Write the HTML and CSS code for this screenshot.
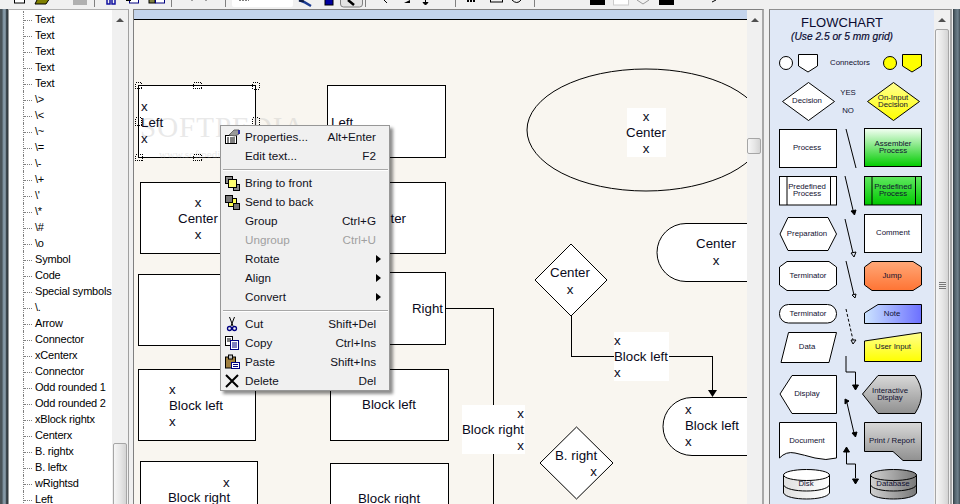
FILE: index.html
```html
<!DOCTYPE html>
<html lang="en">
<head>
<meta charset="utf-8">
<title>Flowchart editor</title>
<link rel="stylesheet" href="styles.css">
</head>
<body>
<div class="app">
  <div class="toolbar">
    <svg class="tb-icons" width="960" height="9" viewBox="0 0 960 9">
      <rect x="14.500" y="-4" width="10" height="7" fill="#fff" stroke="#000"/>
      <path d="M35 4 L38 -2 H50 L46 4 Z" fill="#808000" stroke="#000"/>
      <rect x="73" y="-3" width="14" height="8" fill="#b0b0b0"/>
      <path d="M94.500 0V7M171.500 0V7M225.500 0V7M365.500 0V7M455.500 0V7M534.500 0V7" stroke="#808080" fill="none"/>
      <path d="M107 0v4h3V0M112 0v4h3V0" fill="none" stroke="#1010a0" stroke-width="1.500"/>
      <rect x="129.500" y="-3" width="9" height="6" fill="#fff" stroke="#000080"/><rect x="126" y="0" width="5" height="1" fill="#000"/>
      <rect x="149" y="-2" width="6" height="5" fill="#808040" stroke="#000"/><rect x="155.500" y="-3" width="9" height="6" fill="#fff" stroke="#000080"/>
      <path d="M191 0h2M205 0h2" stroke="#a0a0a0" stroke-width="2"/>
      <rect x="232" y="-4" width="61" height="11" rx="2" fill="#fff"/>
      <path d="M239 0h10" stroke="#000" stroke-dasharray="2 1"/>
      <path d="M299 0 L304 2 L311 6" stroke="#1a3a90" stroke-width="2.500" fill="none"/><path d="M299 1h5" stroke="#000"/>
      <rect x="325" y="-2" width="8" height="7" fill="#0000a0" stroke="#000"/>
      <rect x="340.500" y="-4" width="22" height="11" rx="3" fill="#e4e4e4" stroke="#808080"/>
      <path d="M348 0 L354 5" stroke="#000" stroke-width="2.500"/>
      <path d="M384 0l3 3" stroke="#000"/>
      <path d="M404 3h6V0z" fill="#000"/>
      <path d="M425.500 0v3M423 2.500h5L425.500 5z" stroke="#000" fill="#000"/>
      <path d="M467 1h9" stroke="#000" stroke-dasharray="2 1" stroke-width="2"/>
      <rect x="490.500" y="-4" width="12" height="6" fill="none" stroke="#000"/>
      <path d="M512 0q5 5 9 0" fill="none" stroke="#000"/>
      <rect x="590" y="-2" width="15" height="7" fill="#000"/>
      <rect x="613.500" y="-2" width="15" height="7" fill="#fff" stroke="#ccc"/>
      <path d="M637 0l6 4 6-4" fill="none" stroke="#999"/>
      <rect x="659" y="-2" width="15" height="7" fill="#000"/>
      <path d="M712 2l4-2" stroke="#000"/>
    </svg>
  </div>
  <div class="main">
    <div class="frame-left"></div>

    <div class="tree-pane">
      <ul class="tree">
        <li>Text</li><li>Text</li><li>Text</li><li>Text</li><li>Text</li>
        <li>\&gt;</li><li>\&lt;</li><li>\~</li><li>\=</li><li>\-</li><li>\+</li><li>\'</li><li>\*</li><li>\#</li><li>\o</li>
        <li>Symbol</li><li>Code</li><li>Special symbols</li><li>\.</li><li>Arrow</li><li>Connector</li><li>xCenterx</li><li>Connector</li>
        <li>Odd rounded 1</li><li>Odd rounded 2</li><li>xBlock rightx</li><li>Centerx</li><li>B. rightx</li><li>B. leftx</li><li>wRightsd</li><li>Left</li>
      </ul>
      <div class="scrollbar scrollbar-tree">
        <div class="sb-btn"><span class="arrow-up"></span></div>
        <div class="thumb thumb-tree"></div>
      </div>
    </div>

    <div class="canvas-pane">
      <div class="canvas-col">
        <div class="ruler"></div>
        <svg class="drawing" width="613" height="484" viewBox="134 20 613 484">
          <g class="ol">
            <rect x="138.500" y="85.500" width="117" height="72"/>
            <rect x="327.500" y="85.500" width="118" height="72"/>
            <rect x="140.500" y="182.500" width="117" height="71"/>
            <rect x="327.500" y="182.500" width="118" height="71"/>
            <rect x="138.500" y="274.500" width="118" height="71"/>
            <rect x="327.500" y="272.500" width="118" height="72"/>
            <rect x="138.500" y="369.500" width="117" height="71"/>
            <rect x="330.500" y="369.500" width="118" height="71"/>
            <rect x="140.500" y="461.500" width="117" height="60"/>
            <rect x="330.500" y="463.500" width="118" height="60"/>
            <ellipse class="open" cx="646" cy="130" rx="119" ry="61"/>
            <path d="M748 223.500H686A29 29 0 0 0 686 281.500H748"/>
            <path d="M748 397.500H692A29 29 0 0 0 692 455.500H748"/>
            <polygon points="571,244 607,280 571,316 535,280"/>
            <polygon points="576.500,427 613,463 576.500,499 540,463"/>
          </g>
          <path class="wire" d="M446 308.500H493.500V405M493.500 454V504M571.500 316V356.500H614M669 356.500H712.500V392"/>
          <path d="M708 390H717L712.500 397Z" fill="#000"/>
          <rect class="tbox" x="627" y="108" width="39" height="49"/>
          <rect class="tbox" x="614" y="332" width="55" height="49"/>
          <rect class="tbox" x="462" y="405" width="63" height="49"/>

          <g class="wm">
            <text class="wm-big" x="140" y="137">SOFTPEDIA</text>
            <text class="wm-small" x="159" y="158">www.softpedia.com</text>
          </g>

          <g class="dt">
            <text x="141" y="111">x</text><text x="141" y="127">Left</text><text x="141" y="143">x</text>
            <text x="331" y="127">Left</text>
            <g class="mid">
              <text x="198" y="207">x</text><text x="198" y="223">Center</text><text x="198" y="239">x</text>
              <text x="646" y="121">x</text><text x="646" y="137">Center</text><text x="646" y="153">x</text>
              <text x="716" y="248">Center</text><text x="716" y="265">x</text>
              <text x="570" y="277">Center</text><text x="570" y="294">x</text>
              <text x="389" y="409">Block left</text>
            </g>
            <g class="end">
              <text x="406" y="223">Center</text>
              <text x="443" y="313">Right</text>
              <text x="524" y="418">x</text><text x="524" y="434">Block right</text><text x="524" y="450">x</text>
              <text x="597" y="476">x</text>
            </g>
            <text x="169" y="394">x</text><text x="169" y="410">Block left</text><text x="169" y="426">x</text>
            <text x="223" y="487">x</text><text x="168" y="502">Block right</text>
            <text x="358" y="503">Block right</text>
            <text x="614" y="345">x</text><text x="614" y="361">Block left</text><text x="614" y="377">x</text>
            <text x="685" y="414">x</text><text x="685" y="430">Block left</text><text x="685" y="446">x</text>
            <text x="555" y="460">B. right</text>
          </g>

          <g class="handles">
            <rect x="135.500" y="82.500" width="6" height="6"/><rect x="193.500" y="82.500" width="8" height="6"/><rect x="252.500" y="82.500" width="7" height="7" rx="2"/>
            <rect x="135.500" y="117.500" width="6" height="8"/><rect x="252.500" y="117.500" width="7" height="8" rx="2"/>
            <rect x="135.500" y="154.500" width="7" height="6"/><rect x="193.500" y="154.500" width="8" height="6"/>
          </g>
        </svg>
      </div>
      <div class="scrollbar scrollbar-canvas">
        <div class="sb-btn"><span class="arrow-up"></span></div>
        <div class="thumb thumb-canvas"></div>
      </div>
    </div>

    <div class="palette-pane">
      <svg class="palette" width="164" height="494" viewBox="770 10 164 494">
        <defs>
          <linearGradient id="gGreen" x1="0" y1="0" x2="0" y2="1"><stop offset="0" stop-color="#f4fff4"/><stop offset="1" stop-color="#00cc00"/></linearGradient>
          <linearGradient id="gGreen2" x1="0" y1="0" x2="0" y2="1"><stop offset="0" stop-color="#60e860"/><stop offset="1" stop-color="#00c800"/></linearGradient>
          <linearGradient id="gOrange" x1="0" y1="0" x2="0" y2="1"><stop offset="0" stop-color="#ffa878"/><stop offset="1" stop-color="#ff7434"/></linearGradient>
          <linearGradient id="gNote" x1="0" y1="0" x2="1" y2="0"><stop offset="0" stop-color="#cce4ff"/><stop offset="1" stop-color="#6c70ff"/></linearGradient>
          <linearGradient id="gYellow" x1="0" y1="0" x2="0" y2="1"><stop offset="0" stop-color="#ffff90"/><stop offset="1" stop-color="#ffff00"/></linearGradient>
          <linearGradient id="gGrey" x1="0" y1="0" x2="0" y2="1"><stop offset="0" stop-color="#d8d8d8"/><stop offset="1" stop-color="#909090"/></linearGradient>
          <linearGradient id="gDisk" x1="0" y1="0" x2="1" y2="0"><stop offset="0" stop-color="#e0e0e0"/><stop offset="1" stop-color="#fff"/></linearGradient>
          <linearGradient id="gDb" x1="0" y1="0" x2="1" y2="0"><stop offset="0" stop-color="#d0d0d0"/><stop offset="1" stop-color="#787878"/></linearGradient>
        </defs>

        <text class="p-title" x="842" y="27">FLOWCHART</text>
        <text class="p-sub" x="842" y="40">(Use 2.5 or 5 mm grid)</text>

        <g class="pl">
          <circle cx="786" cy="63" r="6.500"/>
          <polygon points="798.500,54.500 817.500,54.500 817.500,66 808,72 798.500,66"/>
          <polygon points="808.500,82.500 834.500,101.500 808.500,120.500 782.500,101.500"/>
          <rect x="779.500" y="129.500" width="57" height="38"/>
          <rect x="779.500" y="176.500" width="57" height="28.500"/>
          <path class="bare" d="M787 176.500V205M830.500 176.500V205"/>
          <polygon points="788,217.500 828,217.500 836.500,234 828,250.500 788,250.500 780,234"/>
          <rect x="864.500" y="214.500" width="57" height="38"/>
          <polygon points="787,261.500 829,261.500 836.500,267 836.500,285 829,290.500 787,290.500 779.500,285 779.500,267"/>
          <rect x="779.500" y="304.500" width="57" height="18.500" rx="9"/>
          <polygon points="788.500,332.500 836.500,332.500 829,362.500 781,362.500"/>
          <polygon points="792,375.500 836.500,375.500 836.500,413.500 792,413.500 780,394"/>
          <path d="M779.500 422.500H836.500V458Q826 461 815 458T795 453T779.500 458Z"/>
          <path class="f-disk" d="M783.500 475V493C787 501 826 501 829.500 493V475"/>
          <ellipse cx="806.500" cy="475" rx="23" ry="5.500"/>
          <path class="bare" d="M783.500 485C787 493 826 493 829.500 485"/>
        </g>
        <g class="pl">
          <circle cx="890" cy="63" r="6.500" class="f-yel"/>
          <polygon class="f-yel" points="902.500,54.500 921.500,54.500 921.500,66 912,72 902.500,66"/>
          <polygon class="f-yelg" points="893.500,82.500 919.500,101.500 893.500,120.500 867.500,101.500"/>
          <rect class="f-green" x="864.500" y="128.500" width="57" height="38"/>
          <rect class="f-green2" x="864.500" y="176.500" width="57" height="28.500"/>
          <path class="bare" d="M872 176.500V205M915.500 176.500V205"/>
          <polygon class="f-orange" points="872,261.500 913,261.500 921.500,267 921.500,285 913,290.500 872,290.500 864.500,285 864.500,267"/>
          <polygon class="f-note" points="864.500,313 878,304.500 921.500,304.500 921.500,323.500 864.500,323.500"/>
          <polygon class="f-yelg" points="864.500,341 921.500,332.500 921.500,361.500 864.500,361.500"/>
          <path class="f-grey" d="M878 375.500H915Q921.500 385 921.500 394T915 413.500H878L862.500 394Z"/>
          <polygon class="f-grey" points="864.500,422.500 921.500,422.500 921.500,460.500 903,460.500 893,451.500 864.500,451.500"/>
          <path class="f-db" d="M870.500 475V493C874 501 913 501 916.500 493V475"/>
          <ellipse class="f-db" cx="893.500" cy="475" rx="23" ry="5.500"/>
          <path class="bare" d="M870.500 485C874 493 913 493 916.500 485"/>
        </g>

        <g class="ln">
          <path d="M846 129L856 168M845 176L853 210M845 219L853 253M846 261L854 295"/>
          <path class="dash" d="M846 309L853 340"/>
          <path d="M846 356V372H855.500V386"/>
          <path d="M847 403L854 433"/>
          <path d="M846.500 450V464H855.500V478"/>
        </g>
        <g>
          <path class="ah" d="M851 211L856 210L854.500 215Z"/>
          <path class="ah ah-o" d="M851 253L856 252L854 257Z"/>
          <path class="ah ah-o" d="M852 295L856 294L855 298Z"/>
          <path class="ah ah-o" d="M851 340L856 340L853 344Z"/>
          <path class="ah" d="M852.500 385H858.500L855.500 390Z"/>
          <path class="ah" d="M845 399L849 401L845 404ZM852 433L857 432L855.500 437Z"/>
          <path class="ah" d="M843.500 452H849.500L846.500 447ZM852.500 479H858.500L855.500 484Z"/>
        </g>

        <g class="pt">
          <text x="850" y="65">Connectors</text>
          <text x="807" y="103">Decision</text>
          <text x="848" y="95">YES</text>
          <text x="848" y="113">NO</text>
          <text x="893" y="100">On-Input</text><text x="893" y="107">Decision</text>
          <text x="807" y="150">Process</text>
          <text x="893" y="146">Assembler</text><text x="893" y="153">Process</text>
          <text x="807" y="189">Predefined</text><text x="807" y="196">Process</text>
          <text x="893" y="189">Predefined</text><text x="893" y="196">Process</text>
          <text x="807" y="236">Preparation</text>
          <text x="893" y="235">Comment</text>
          <text x="808" y="278">Terminator</text>
          <text x="892" y="278">Jump</text>
          <text x="808" y="316">Terminator</text>
          <text x="892" y="316">Note</text>
          <text x="807" y="349">Data</text>
          <text x="893" y="349">User Input</text>
          <text x="807" y="396">Display</text>
          <text x="890" y="393">Interactive</text><text x="890" y="400">Display</text>
          <text x="807" y="443">Document</text>
          <text x="892" y="443">Print / Report</text>
          <text x="806" y="486">Disk</text>
          <text x="893" y="486">Database</text>
        </g>
      </svg>
      <div class="scrollbar scrollbar-palette">
        <div class="sb-btn"><span class="arrow-up"></span></div>
        <div class="thumb thumb-palette"><span class="grip"></span></div>
      </div>
    </div>
    <div class="frame-right"></div>
  </div>

  <div class="menu">
    <div class="mi"><svg class="ic" viewBox="0 0 16 16"><rect x="1.500" y="6.500" width="11" height="8" fill="#fff" stroke="#000"/><path d="M3 9h2M6 9h5M3 11h2M6 11h5M3 13h2M6 13h5" stroke="#000"/><path d="M5 6L10 1H15V5L11 7Z" fill="#999" stroke="#666"/><rect x="14" y="1" width="2" height="4" fill="#3030a0"/></svg><span class="lb">Properties...</span><span class="sc">Alt+Enter</span></div>
    <div class="mi"><span class="ic"></span><span class="lb">Edit text...</span><span class="sc">F2</span></div>
    <div class="ms"></div>
    <div class="mi"><svg class="ic" viewBox="0 0 16 16"><rect x="1.500" y="1.500" width="7" height="7" fill="#888" stroke="#000"/><rect x="9.500" y="9.500" width="6" height="6" fill="#888" stroke="#000"/><rect x="4.500" y="4.500" width="8" height="8" fill="#ffff70" stroke="#000"/></svg><span class="lb">Bring to front</span></div>
    <div class="mi"><svg class="ic" viewBox="0 0 16 16"><rect x="4.500" y="4.500" width="8" height="8" fill="#ffff50" stroke="#000"/><rect x="1.500" y="1.500" width="7" height="7" fill="#777" stroke="#000"/><rect x="9.500" y="9.500" width="6" height="6" fill="#777" stroke="#000"/></svg><span class="lb">Send to back</span></div>
    <div class="mi"><span class="ic"></span><span class="lb">Group</span><span class="sc">Ctrl+G</span></div>
    <div class="mi off"><span class="ic"></span><span class="lb">Ungroup</span><span class="sc">Ctrl+U</span></div>
    <div class="mi"><span class="ic"></span><span class="lb">Rotate</span><span class="sub"></span></div>
    <div class="mi"><span class="ic"></span><span class="lb">Align</span><span class="sub"></span></div>
    <div class="mi"><span class="ic"></span><span class="lb">Convert</span><span class="sub"></span></div>
    <div class="ms"></div>
    <div class="mi"><svg class="ic" viewBox="0 0 16 16"><path d="M5.500 1L9 10M10.500 1L7 10" stroke="#000" fill="none"/><circle cx="5.500" cy="12.500" r="2" fill="none" stroke="#000080" stroke-width="1.300"/><circle cx="10.500" cy="12.500" r="2" fill="none" stroke="#000080" stroke-width="1.300"/></svg><span class="lb">Cut</span><span class="sc">Shift+Del</span></div>
    <div class="mi"><svg class="ic" viewBox="0 0 16 16"><rect x="1.500" y="1.500" width="7" height="9" fill="#fff" stroke="#000"/><path d="M3 4h4M3 6h4" stroke="#000"/><rect x="6.500" y="5.500" width="8" height="9" fill="#fff" stroke="#000080"/><path d="M8 8h5M8 10h5M8 12h5" stroke="#000080"/></svg><span class="lb">Copy</span><span class="sc">Ctrl+Ins</span></div>
    <div class="mi"><svg class="ic" viewBox="0 0 16 16"><rect x="1.500" y="3" width="10" height="11" fill="#a08040" stroke="#000"/><rect x="4.500" y="1" width="4" height="4" fill="#c8c8c8" stroke="#000"/><rect x="7.500" y="8.500" width="8" height="6" fill="#fff" stroke="#000080"/><path d="M9 10.500h5M9 12.500h5" stroke="#000080"/></svg><span class="lb">Paste</span><span class="sc">Shift+Ins</span></div>
    <div class="mi"><svg class="ic" viewBox="0 0 16 16"><path d="M2 2L14 14M14 2L2 14" stroke="#000" stroke-width="2"/></svg><span class="lb">Delete</span><span class="sc">Del</span></div>
  </div>
</div>
</body>
</html>
```
FILE: styles.css
```css
* { box-sizing: border-box; }
html, body { margin: 0; padding: 0; }
body { width: 960px; height: 504px; overflow: hidden; background: #f0f0f0; font-family: "Liberation Sans", Arial, sans-serif; }

.app { position: relative; width: 960px; height: 504px; overflow: hidden; display: flex; flex-direction: column; }

.toolbar { height: 9px; flex: none; background: #f0f0f0; overflow: hidden; }
.tb-icons { display: block; }

.main { flex: 1; min-height: 0; display: flex; }

.frame-left { width: 8px; flex: none; background: linear-gradient(90deg, #4a5358 0, #4a5358 25%, #7d909d 40%, #8a9daa 65%, #3d474d 80%, #2f373c 100%); }
.frame-right { width: 7px; flex: none; margin-left: 1px; background: linear-gradient(90deg, #2f3a40 0, #55666f 30%, #6f818c 70%, #3f4c54 100%); }

.tree-pane { width: 121px; flex: none; display: flex; border-left: 1px solid #9a9a9a; border-top: 1px solid #b0b0b0; border-right: 1px solid #a0a0a0; margin-right: 4px; background: #fff; }
.tree { flex: 1; margin: 0; padding: 1px 0 0 14px; list-style: none; font-size: 11px; letter-spacing: -0.2px; color: #000; background: #fff; overflow: hidden; min-width: 0; }
.tree li { height: 16px; line-height: 16px; white-space: nowrap; border-left: 1px dotted #808080; }
.tree li::before { content: ""; display: inline-block; width: 8px; height: 0; margin-right: 3px; border-top: 1px dotted #808080; vertical-align: middle; }

.scrollbar { flex: none; display: flex; flex-direction: column; background: #f0f0f0; }
.scrollbar-tree { width: 16px; }
.scrollbar-canvas { width: 15px; }
.scrollbar-palette { width: 16px; }
.sb-btn { height: 19px; flex: none; display: flex; align-items: center; justify-content: center; }
.arrow-up { width: 0; height: 0; border: 4px solid transparent; border-top: 0; border-bottom: 4px solid #505050; }

.thumb { flex: none; border: 1px solid #a6a6a6; border-radius: 2px; background: linear-gradient(90deg, #f6f6f6, #e6e6e6 55%, #d4d4d4); }
.thumb-tree { margin: 414px 1px 0; height: 70px; }
.thumb-canvas { margin: 109px 1px 0 0; height: 16px; width: 14px; }
.thumb-palette { margin: 0 1px; height: 512px; display: flex; justify-content: center; }
.grip { width: 7px; height: 8px; margin-top: 251px; background: repeating-linear-gradient(0deg, #777 0, #777 1px, #e8e8e8 1px, #e8e8e8 2px); }

.canvas-pane { width: 631px; flex: none; display: flex; border-left: 1px solid #808080; border-top: 1px solid #808080; border-right: 2px solid #a8a8a8; }
.canvas-col { width: 613px; flex: none; display: flex; flex-direction: column; }
.ruler { height: 10px; flex: none; background: #c4d4ec; border-bottom: 1px solid #000; }
.drawing { display: block; flex: none; background: #f9f6f0; }

.palette-pane { width: 183px; flex: none; margin-left: 5px; display: flex; border-left: 1px solid #808080; border-top: 1px solid #909090; border-right: 2px solid #a8a8a8; }
.palette { display: block; flex: none; background: #e0e8f6; }

.ol rect, .ol ellipse, .ol path, .ol polygon { fill: #fff; stroke: #000; stroke-width: 1; }
.ol rect { shape-rendering: crispEdges; }
.ol .open { fill: none; }
.wire { fill: none; stroke: #000; stroke-width: 1; shape-rendering: crispEdges; }
.tbox { fill: #fff; }

.dt text { font-family: "Liberation Sans", Arial, sans-serif; font-size: 13.300px; fill: #0a0a20; }
.dt .mid text { text-anchor: middle; }
.dt .end text { text-anchor: end; }

.wm text { font-family: "Liberation Serif", serif; fill: #b8b8b8; opacity: 0.3; }
.wm-big { font-size: 29px; letter-spacing: 1px; }
.wm-small { font-size: 11px; }

.handles rect { fill: none; stroke: #000; stroke-width: 1; stroke-dasharray: 1 1; shape-rendering: crispEdges; }

.pl > * { fill: #fff; stroke: #000; stroke-width: 1; }
.pl > .bare { fill: none; }
.pl > .f-disk { fill: url(#gDisk); }
.pl > .f-yel { fill: #ffff00; }
.pl > .f-yelg { fill: url(#gYellow); }
.pl > .f-green { fill: url(#gGreen); }
.pl > .f-green2 { fill: url(#gGreen2); }
.pl > .f-orange { fill: url(#gOrange); }
.pl > .f-note { fill: url(#gNote); }
.pl > .f-grey { fill: url(#gGrey); }
.pl > .f-db { fill: url(#gDb); }

.ln path { fill: none; stroke: #000; stroke-width: 1; }
.ln .dash { stroke-dasharray: 3 2; }
.ah { fill: #000; stroke: #000; stroke-width: 1; }
.ah-o { fill: #e0e8f6; }

.p-title { font-size: 13px; text-anchor: middle; fill: #0a0a30; }
.p-sub { font-size: 10.200px; font-style: italic; text-anchor: middle; fill: #0a0a30; stroke: #0a0a30; stroke-width: 0.200; }
.pt text { font-size: 7.800px; text-anchor: middle; fill: #101030; }

.menu { position: absolute; left: 220px; top: 125px; width: 170px; padding-top: 1px; background: #f0f0f0; border: 1px solid #979797; box-shadow: 3px 3px 3px rgba(0, 0, 0, 0.45); font-size: 11.700px; color: #101020; }
.mi { height: 19px; display: flex; align-items: center; padding-right: 13px; position: relative; }
.ic { width: 16px; height: 16px; margin-left: 3px; margin-right: 5px; flex: none; display: block; }
.lb { flex: 1; white-space: nowrap; }
.sc { white-space: nowrap; }
.off { color: #a0a0a0; }
.sub { width: 0; height: 0; margin-right: -5px; border: 4px solid transparent; border-right: 0; border-left: 5px solid #000; }
.ms { height: 1px; margin: 4px 1px 3px 2px; background: #a8a8a8; box-shadow: 0 1px 0 #fff; }
```
